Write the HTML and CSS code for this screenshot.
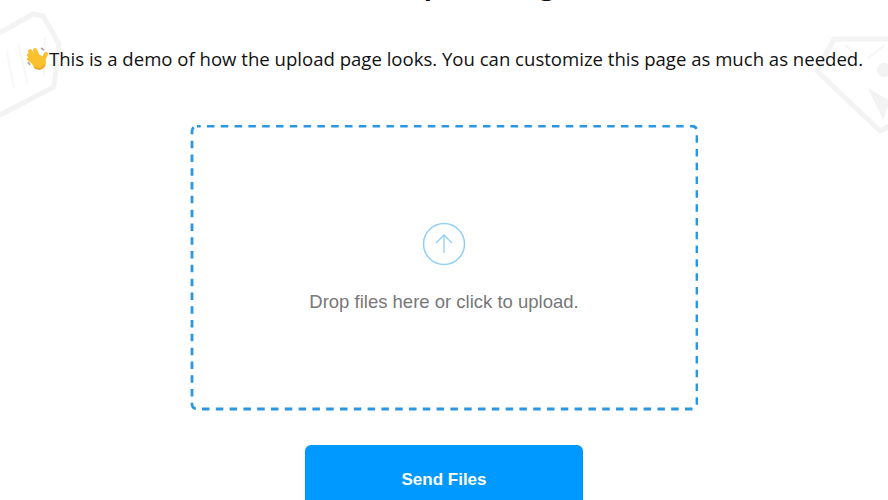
FILE: index.html
```html
<!DOCTYPE html>
<html>

<head>
  <title>Upload Page</title>
  <link rel="stylesheet" href="styles.css">
</head>

<body>
  <!-- faint doodles behind the page -->
  <svg class="doodle doodle-left" viewBox="0 0 62 120" width="62" height="120">
    <path d="M-6 36 L33 14 L43 16 L59 44 L54 87 L-6 118" fill="none" stroke="#f3f3f3" stroke-width="5" stroke-linejoin="round" />
    <path d="M7 52 L14 88 M18 44 L28 84 M45 38 L44 76" fill="none" stroke="#f7f7f7" stroke-width="2" />
  </svg>
  <svg class="doodle doodle-right" viewBox="0 0 80 120" width="80" height="120">
    <path d="M90 14 L26 14 L9 46 L72 106 L90 96" fill="none" stroke="#f3f3f3" stroke-width="5" stroke-linejoin="round" />
    <path d="M37 20 L50 32 M77 20 L60 33" fill="none" stroke="#f6f6f6" stroke-width="2" />
    <circle cx="76" cy="45" r="7" fill="#f3f3f3" />
    <path d="M60 63 L82 76 L75 95 Z" fill="#f3f3f3" />
  </svg>

  <main class="page">
    <h1 class="title">Demo Upload Page</h1>

    <p class="intro">
      <svg class="wave" viewBox="0 0 24 24" width="24" height="24">
        <path d="M16 1 L19 3 M3 15 L5 18" stroke="#a8a8a8" stroke-width="1.6" fill="none" />
        <g stroke="#fbc02d" stroke-width="4" stroke-linecap="round" fill="none">
          <path d="M12 13 L5 4" />
          <path d="M14 12 L10 3" />
          <path d="M10 14 L4 8" />
          <path d="M9 16 L4 12" />
          <path d="M18 13 L21 7" />
        </g>
        <circle cx="14" cy="15" r="7" fill="#fbc02d" />
        <path d="M9 20 C12 23 17 23 20 18" stroke="#ef9f16" stroke-width="1.4" fill="none" />
      </svg>This is a demo of how the upload page looks. You can customize this page as much as needed.
    </p>

    <div class="dropzone">
      <svg class="dropzone-border" viewBox="0 0 508 286" width="508" height="286">
        <rect x="2" y="1" width="505" height="283" rx="5" fill="none" stroke="#2b97e3" stroke-width="2.8" stroke-dasharray="7.5 6.3" stroke-dashoffset="3.8" />
      </svg>
      <svg class="upload-icon" viewBox="0 0 44 44" width="44" height="44">
        <circle cx="22" cy="22" r="20.5" fill="none" stroke="#8fd0fb" stroke-width="1.5" />
        <path d="M22 31 L22 13 M14 21 L22 13 L30 21" fill="none" stroke="#8fd0fb" stroke-width="1.3" />
      </svg>
      <p class="dropzone-text">Drop files here or click to upload.</p>
    </div>

    <button class="send-btn">Send Files</button>
  </main>
</body>

</html>
```

FILE: styles.css
```css
html,
body {
  height: 100%;
  margin: 0;
}

body {
  background-color: #fff;
  overflow: hidden;
  position: relative;
}

.doodle {
  position: absolute;
}

.doodle-left {
  left: 0;
  top: 0;
}

.doodle-right {
  right: 0;
  top: 25px;
}

.page {
  display: flex;
  flex-direction: column;
  align-items: center;
  position: relative;
}

.title {
  font-family: "Open Sans", sans-serif;
  font-size: 27px;
  font-weight: 700;
  line-height: 38px;
  color: #111;
  margin: -34px 0 0;
}

.intro {
  display: flex;
  align-items: center;
  font-family: "Open Sans", sans-serif;
  font-size: 18.57px;
  line-height: 24px;
  color: #111;
  margin: 43px 0 0;
  white-space: nowrap;
}

.wave {
  flex: none;
}

.dropzone {
  box-sizing: border-box;
  position: relative;
  width: 508px;
  height: 286px;
  margin-top: 54px;
  display: flex;
  flex-direction: column;
  align-items: center;
  justify-content: center;
}

.dropzone-border {
  position: absolute;
  left: 0;
  top: 0;
}

.dropzone-text {
  font-family: "Liberation Sans", sans-serif;
  font-size: 18.5px;
  line-height: 24px;
  color: #777;
  margin: 24px 0 0;
}

.send-btn {
  width: 278px;
  height: 70px;
  margin-top: 34px;
  background-color: #0099ff;
  border: none;
  border-radius: 6px;
  color: #fff;
  font-family: "Liberation Sans", sans-serif;
  font-size: 17px;
  font-weight: 700;
  cursor: pointer;
}
```
